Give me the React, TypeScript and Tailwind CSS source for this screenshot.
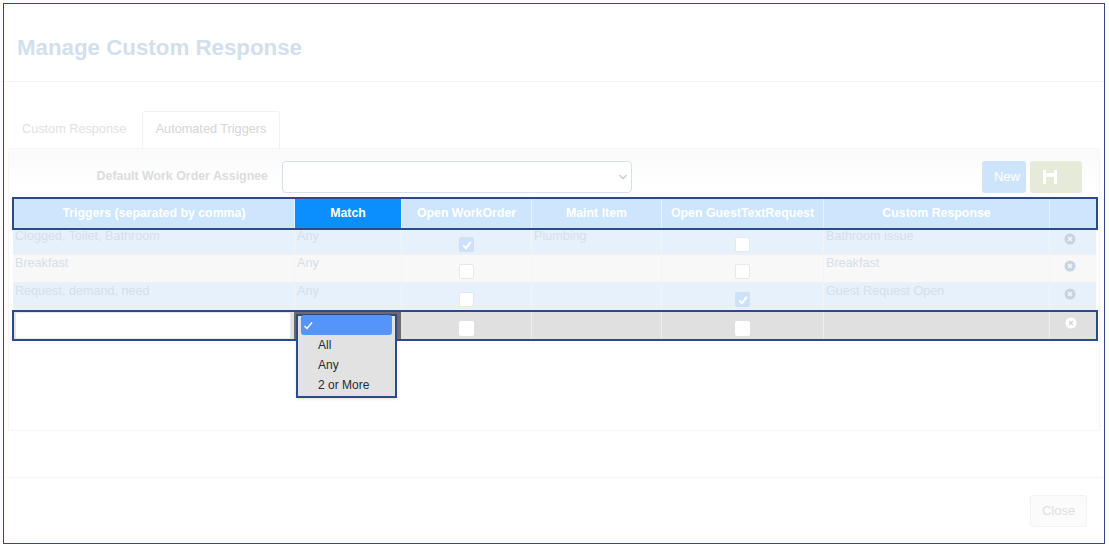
const font = { fontFamily: '"Liberation Sans", Arial, sans-serif' }

const COLS = 'grid grid-cols-[280px_107px_130px_130px_162px_226px_46px]'
const ROW_COLS = 'grid grid-cols-[281px_107px_130px_130px_162px_226px_45px]'

const HEADERS = [
  'Triggers (separated by comma)',
  'Match',
  'Open WorkOrder',
  'Maint Item',
  'Open GuestTextRequest',
  'Custom Response',
  '',
]

const ROWS = [
  { trigger: 'Clogged, Toilet, Bathroom', match: 'Any', order: true, item: 'Plumbing', guest: false, response: 'Bathroom issue', cls: 'h-[27px] bg-[#e6f1fc]' },
  { trigger: 'Breakfast', match: 'Any', order: false, item: '', guest: false, response: 'Breakfast', cls: 'h-[28px] bg-[#f8f8f8]' },
  { trigger: 'Request, demand, need', match: 'Any', order: false, item: '', guest: true, response: 'Guest Request Open', cls: 'h-[27px] bg-[#e6f1fc]' },
]

function Check({ checked = false, plain = false }: { checked?: boolean; plain?: boolean }) {
  return (
    <span
      className={`flex h-[15px] w-[15px] items-center justify-center rounded-[2px] ${
        checked ? 'bg-[#cfe0fb]' : plain ? 'bg-white' : 'border border-[#e8e8e8] bg-white'
      }`}
    >
      {checked && (
        <svg width="12" height="12" viewBox="0 0 12 12" fill="none" stroke="white" strokeWidth="2">
          <path d="M2.2 6.4 5 9.2 9.8 2.8" />
        </svg>
      )}
    </span>
  )
}

function RemoveIcon({ light = false }: { light?: boolean }) {
  return (
    <svg width="12" height="12" viewBox="0 0 12 12">
      <circle cx="6" cy="6" r="5.5" fill={light ? '#ffffff' : '#c9d3dd'} />
      <path d="M4 4 8 8M8 4 4 8" stroke={light ? '#d5d5d5' : '#f4f7fa'} strokeWidth="1.5" />
    </svg>
  )
}

function TriggerRow({ row }: { row: (typeof ROWS)[number] }) {
  return (
    <div className={`${ROW_COLS} ml-px border-b border-[#eef0f2] text-[12.6px] leading-[14px] text-[#d6dee7] ${row.cls}`}>
      <div className="pl-[2px] pt-px">{row.trigger}</div>
      <div className="border-l border-[#f1f5f9] pl-[2px] pt-px">{row.match}</div>
      <div className="flex justify-center border-l border-[#f1f5f9] pt-[9px]"><Check checked={row.order} /></div>
      <div className="border-l border-[#f1f5f9] pl-[2px] pt-px">{row.item}</div>
      <div className="flex justify-center border-l border-[#f1f5f9] pt-[9px]"><Check checked={row.guest} /></div>
      <div className="border-l border-[#f1f5f9] pl-[2px] pt-px">{row.response}</div>
      <div className="flex justify-center border-l border-[#f1f5f9] pr-[4px] pt-[5px]"><RemoveIcon /></div>
    </div>
  )
}

function MatchMenu() {
  return (
    <div className="absolute left-[2px] top-[2px] z-10 h-[84px] w-[101px] border-2 border-[#2c4a86] bg-[#e2e2e2] text-[12px] leading-[20px] text-[#2b2b2b] shadow-sm">
      <div className="mx-[3px] -mt-px flex h-[20px] items-center rounded-[3px] bg-[#5595fb] pl-[2px]">
        <svg width="11" height="11" viewBox="0 0 11 11" fill="none" stroke="white" strokeWidth="1.5">
          <path d="M1.5 6 4 8.5 9 2.5" />
        </svg>
      </div>
      <div className="pl-[20px]">All</div>
      <div className="pl-[20px]">Any</div>
      <div className="pl-[20px]">2 or More</div>
    </div>
  )
}

export default function App() {
  return (
    <div className="h-[547px] w-[1109px] overflow-hidden bg-white p-[3px]" style={font}>
      <div className="flex h-[541px] w-[1102px] flex-col border border-[#2c4a86]">
        <div className="flex h-[78px] items-center border-b border-[#f5f5f5] pl-[13px] pt-[10px]">
          <h1 className="text-[22.3px] font-bold text-[#d2e0ec]">Manage Custom Response</h1>
        </div>

        <div className="flex h-[66px] items-end px-[4px]">
          <div className="flex h-[38px] w-[134px] items-center pl-[14px] pt-px text-[12.7px] text-[#e2e2e2]">Custom Response</div>
          <div className="-mb-px flex h-[38px] w-[138px] items-center justify-center rounded-t-[3px] border border-b-0 border-[#f1f1f1] bg-white pb-px text-[12.7px] text-[#d5d5d5]">
            Automated Triggers
          </div>
        </div>

        <div className="mx-[4px] h-[283px] border border-[#f6f6f6] bg-[linear-gradient(#fafafa,#ffffff_40px)] px-[3px] pt-[12px]">
          <div className="flex h-[38px] items-start">
            <div className="w-[270px] pr-[14px] pt-[6px] text-right text-[12.4px] font-bold text-[#dcdcdc]">Default Work Order Assignee</div>
            <div className="flex h-[32px] w-[350px] items-center justify-end rounded-[4px] border border-[#d6e0ea] bg-white pr-[3px]">
              <svg width="10" height="6" viewBox="0 0 10 6" fill="none" stroke="#cfcfcf" strokeWidth="1.5">
                <path d="M1.5 1 5 4.6 8.5 1" />
              </svg>
            </div>
            <div className="ml-[350px] flex h-[32px] w-[44px] items-center justify-center rounded-[3px] bg-[#cde5fa] pl-[6px] text-[13px] text-white">New</div>
            <div className="ml-[4px] flex h-[32px] w-[52px] items-center rounded-[3px] bg-[#e6ead9] pl-[13px]">
              <svg width="14" height="14" viewBox="0 0 14 14" fill="white">
                <path d="M0 0H3V3H11V0H14V14H11V7H3V14H0Z" />
              </svg>
            </div>
          </div>

          <div className={`${COLS} relative ml-[2px] h-[29px] bg-[#cde6fd] text-[12.35px] font-bold text-white outline-2 outline-[#2c4a86]`}>
            {HEADERS.map((title, i) => (
              <div
                key={i}
                className={`flex items-center justify-center ${i > 0 ? 'border-l border-[#e6f2fd]' : ''} ${title === 'Match' ? 'bg-[#0b8ffe]' : ''}`}
              >
                {title}
              </div>
            ))}
          </div>

          {ROWS.map(row => <TriggerRow key={row.trigger} row={row} />)}

          <div className={`${COLS} relative ml-[2px] mt-[2px] h-[27px] bg-[#e0e0e0] outline-2 outline-[#2c4a86]`}>
            <div className="pr-[3px] pl-px">
              <div className="h-full rounded-[2px] border border-[#e4e8ee] bg-white" />
            </div>
            <div className="relative bg-[#6e6e6e]">
              <MatchMenu />
            </div>
            <div className="flex justify-center pt-[9px]"><Check plain /></div>
            <div className="border-l border-[#eeeeee]" />
            <div className="flex justify-center border-l border-[#eeeeee] pt-[9px]"><Check plain /></div>
            <div className="border-l border-[#eeeeee]" />
            <div className="flex justify-center border-l border-[#eeeeee] pr-[4px] pt-[5px]"><RemoveIcon light /></div>
          </div>
        </div>

        <div className="mt-[46px] flex flex-1 justify-end border-t border-[#f7f7f7] pr-[17px] pt-[17px]">
          <div className="flex h-[32px] w-[57px] items-center justify-center rounded-[3px] border border-[#f3f3f3] bg-[#fbfbfb] text-[13px] text-[#dedede]">Close</div>
        </div>
      </div>
    </div>
  )
}
